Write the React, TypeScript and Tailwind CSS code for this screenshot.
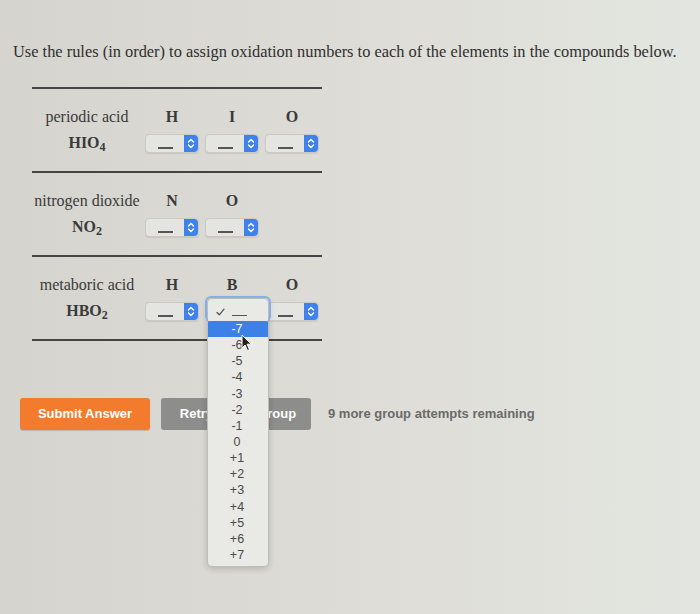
import React from "react";

function Stepper() {
  return (
    <div className="w-[14px] h-full bg-[#3f82ee] rounded-r-[4px] flex items-center justify-center">
      <svg width="8" height="11" viewBox="0 0 8 11" fill="none" stroke="white" strokeWidth="1.4" strokeLinecap="round" strokeLinejoin="round">
        <path d="M1.5 4 L4 1.5 L6.5 4" />
        <path d="M1.5 7 L4 9.5 L6.5 7" />
      </svg>
    </div>
  );
}

function Select({ hidden }: { hidden?: boolean }) {
  return (
    <div className={"w-[54px] h-[19px] flex rounded-[4px] border border-[#c9c9c6] bg-[#e4e4e1] shadow-[0_1px_1px_rgba(0,0,0,0.08)] " + (hidden ? "opacity-0" : "")}>
      <div className="flex-1 flex items-end justify-center pb-[3px]">
        <div className="w-[15px] h-[1.5px] bg-[#555]" />
      </div>
      <Stepper />
    </div>
  );
}

type Row = { name: string; formula: React.ReactNode; els: string[]; open?: number };

const sub = "text-[12px] relative top-[3px] align-baseline";

const rows: Row[] = [
  { name: "periodic acid", formula: <>HIO<sub className={sub}>4</sub></>, els: ["H", "I", "O"] },
  { name: "nitrogen dioxide", formula: <>NO<sub className={sub}>2</sub></>, els: ["N", "O"] },
  { name: "metaboric acid", formula: <>HBO<sub className={sub}>2</sub></>, els: ["H", "B", "O"], open: 1 },
];

const options = ["-7", "-6", "-5", "-4", "-3", "-2", "-1", "0", "+1", "+2", "+3", "+4", "+5", "+6", "+7"];

export default function App() {
  return (
    <div
      className="w-[700px] h-[614px] relative overflow-hidden bg-gradient-to-r from-[#d6d4cf] via-[#dedcd7] to-[#e3e6e0] text-[#333]"
      style={{ fontFamily: '"Liberation Serif", "Times New Roman", serif' }}
    >
      <p className="pt-[42px] pl-[13px] text-[16.4px] leading-[20px] text-[#2f2f2f] whitespace-nowrap">
        Use the rules (in order) to assign oxidation numbers to each of the elements in the compounds below.
      </p>

      <div className="ml-[32px] mt-[25px] w-[290px]">
        {rows.map((r, i) => (
          <div key={i} className="border-t-2 border-[#444] pt-[18px] pb-[18px]">
            <div className="grid grid-cols-[110px_60px_60px_60px] h-[20px] items-center text-[16px] leading-[20px] text-[#3a3a3a]">
              <div className="text-center whitespace-nowrap">{r.name}</div>
              {r.els.map((e, j) => (
                <div key={j} className="text-center font-bold">{e}</div>
              ))}
            </div>
            <div className="grid grid-cols-[110px_60px_60px_60px] h-[20px] mt-[6px] items-center text-[16px] leading-[20px] text-[#3a3a3a]">
              <div className="text-center font-bold">{r.formula}</div>
              {r.els.map((e, j) => (
                <div key={j} className="flex justify-center">
                  <Select hidden={r.open === j} />
                </div>
              ))}
            </div>
          </div>
        ))}
        <div className="border-t-2 border-[#444]" />
      </div>

      <div
        className="mt-[57px] pl-[20px] flex items-center"
        style={{ fontFamily: '"Liberation Sans", Arial, sans-serif' }}
      >
        <button className="w-[130px] h-[32px] bg-[#f27b2e] rounded-[3px] text-white text-[13px] font-bold shadow-[0_1px_1px_rgba(0,0,0,0.15)]">
          Submit Answer
        </button>
        <button className="ml-[11px] w-[150px] h-[32px] bg-[#8d8d8b] rounded-[3px] text-white text-[13px] font-bold pl-[4px]">
          Retry Entire Group
        </button>
        <span className="ml-[17px] text-[13px] font-bold text-[#6a6a6a]">9 more group attempts remaining</span>
      </div>

      {/* open dropdown menu */}
      <div
        className="absolute left-[207px] top-[298px] w-[62px] h-[269px] bg-[#e9e9e6] border border-[#bdbdba] rounded-[5px] shadow-[0_2px_6px_rgba(0,0,0,0.18)] pt-[3px] pb-[6px] text-[12.5px] text-[#4a4a4a]"
        style={{ fontFamily: '"Liberation Sans", Arial, sans-serif' }}
      >
        <div className="h-[19px] flex items-center pl-[8px]">
          <svg width="9" height="8" viewBox="0 0 9 8" fill="none" stroke="#555" strokeWidth="1.3" strokeLinecap="round" strokeLinejoin="round">
            <path d="M1 4.5 L3.3 6.8 L8 1.2" />
          </svg>
          <div className="ml-[7px] mt-[8px] w-[15px] h-[1.5px] bg-[#555]" />
        </div>
        {options.map((o, i) => (
          <div
            key={o}
            className={
              "h-[16.15px] leading-[16.15px] text-center pr-[2px] " +
              (i === 0 ? "bg-[#3d80e6] text-white" : "")
            }
          >
            {o}
          </div>
        ))}
      </div>
      {/* focus ring of the open select */}
      <div className="absolute left-[205px] top-[296px] w-[66px] h-[26px] rounded-[6px] border-2 border-[#86aee9] border-b-0 pointer-events-none" />

      {/* mouse cursor */}
      <svg className="absolute left-[241px] top-[334px]" width="12" height="18" viewBox="0 0 12 18">
        <path d="M1 1 L1 14 L4 11 L6.5 16.5 L8.5 15.6 L6.1 10.2 L10.2 10.2 Z" fill="#222" stroke="white" strokeWidth="1" strokeLinejoin="round" />
      </svg>
    </div>
  );
}
